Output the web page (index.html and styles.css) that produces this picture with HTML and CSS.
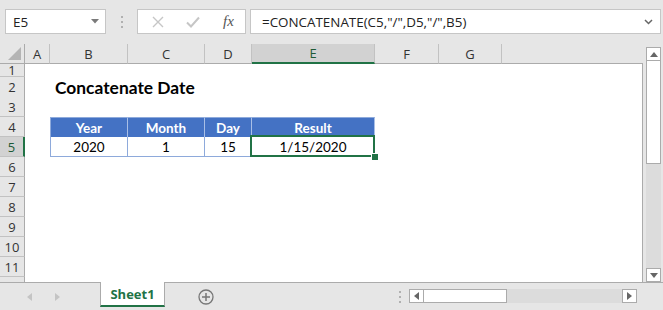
FILE: index.html
```html
<!DOCTYPE html>
<html lang="en">
<head>
  <meta charset="UTF-8">
  <title>Concatenate Date</title>
  <link rel="stylesheet" href="styles.css">
</head>
<body>
  <div class="app">
    <!-- Name box + formula bar -->
    <div class="toolbar">
      <div class="namebox">
        <span>E5</span>
        <svg class="caret" width="8" height="5" viewBox="0 0 8 5"><path d="M0 0h8L4 4.5z" fill="#7a7a7a"/></svg>
      </div>
      <div class="grip"><i></i><i></i><i></i></div>
      <div class="fxbtns">
        <svg width="12" height="12" viewBox="0 0 12 12"><path d="M1 1l10 10M11 1L1 11" stroke="#c6c6c6" stroke-width="1.4"/></svg>
        <svg width="14" height="12" viewBox="0 0 14 12"><path d="M1 6.5l4 4L13 1.5" stroke="#c6c6c6" stroke-width="2" fill="none"/></svg>
        <span class="fx">fx</span>
      </div>
      <div class="formula">
        <span>=CONCATENATE(C5,"/",D5,"/",B5)</span>
        <svg width="9" height="6" viewBox="0 0 9 6"><path d="M1 1l3.5 3.5L8 1" stroke="#666" stroke-width="1.5" fill="none"/></svg>
      </div>
    </div>

    <div class="main">
      <div class="sheet">
        <div class="row colhead">
          <div class="corner"></div>
          <div class="ch">A</div>
          <div class="ch">B</div>
          <div class="ch">C</div>
          <div class="ch">D</div>
          <div class="ch selected">E</div>
          <div class="ch">F</div>
          <div class="ch">G</div>
          <div class="ch last"></div>
        </div>
        <div class="row r1"><div class="rh"><span>1</span></div></div>
        <div class="row">
          <div class="rh">2</div>
          <div></div>
          <div class="title">Concatenate Date</div>
        </div>
        <div class="row"><div class="rh">3</div></div>
        <div class="row">
          <div class="rh">4</div>
          <div></div>
          <div class="tc th first">Year</div>
          <div class="tc th">Month</div>
          <div class="tc th">Day</div>
          <div class="tc th">Result</div>
        </div>
        <div class="row">
          <div class="rh selected">5</div>
          <div></div>
          <div class="tc first">2020</div>
          <div class="tc">1</div>
          <div class="tc">15</div>
          <div class="tc active">1/15/2020</div>
        </div>
        <div class="row"><div class="rh">6</div></div>
        <div class="row"><div class="rh">7</div></div>
        <div class="row"><div class="rh">8</div></div>
        <div class="row"><div class="rh">9</div></div>
        <div class="row"><div class="rh">10</div></div>
        <div class="row"><div class="rh">11</div></div>
        <div class="row r12"><div class="rh"></div></div>
      </div>

      <div class="vscroll">
        <div class="sbtn">
          <svg width="8" height="5" viewBox="0 0 8 5"><path d="M0 5h8L4 0z" fill="#666"/></svg>
        </div>
        <div class="vthumb"></div>
        <div class="vtrack"></div>
        <div class="sbtn">
          <svg width="8" height="5" viewBox="0 0 8 5"><path d="M0 0h8L4 5z" fill="#666"/></svg>
        </div>
      </div>
    </div>

    <!-- Sheet tabs + horizontal scroll -->
    <div class="tabbar">
      <div class="tabnav">
        <svg width="5" height="8" viewBox="0 0 5 8"><path d="M5 0v8L0 4z" fill="#c4c4c4"/></svg>
        <svg width="5" height="8" viewBox="0 0 5 8"><path d="M0 0v8l5-4z" fill="#c4c4c4"/></svg>
      </div>
      <div class="tab">Sheet1</div>
      <svg class="addsheet" width="16" height="16" viewBox="0 0 16 16">
        <circle cx="8" cy="8" r="7" stroke="#777" stroke-width="1.3" fill="none"/>
        <path d="M8 4v8M4 8h8" stroke="#777" stroke-width="1.5"/>
      </svg>
      <div class="grip hgrip"><i></i><i></i><i></i></div>
      <div class="hscroll">
        <div class="sbtn">
          <svg width="5" height="8" viewBox="0 0 5 8"><path d="M5 0v8L0 4z" fill="#666"/></svg>
        </div>
        <div class="hthumb"></div>
        <div class="htrack"></div>
        <div class="sbtn">
          <svg width="5" height="8" viewBox="0 0 5 8"><path d="M0 0v8l5-4z" fill="#666"/></svg>
        </div>
      </div>
    </div>
  </div>
</body>
</html>
```

FILE: styles.css
```css
body {
  margin: 0;
  background-color: #e6e6e6;
  font-family: 'Open Sans', sans-serif;
  color: #333;
}

.app {
  width: 663px;
  height: 310px;
  overflow: hidden;
  background-color: #e6e6e6;
}

/* Barra de fórmulas */
.toolbar {
  height: 44px;
  display: flex;
  align-items: flex-start;
  padding-top: 9px;
  box-sizing: border-box;
}

.namebox {
  margin-left: 5px;
  width: 101px;
  height: 25px;
  box-sizing: border-box;
  background-color: #fff;
  border: 1px solid #c6c6c6;
  display: flex;
  align-items: center;
  justify-content: space-between;
  padding: 0 6px 0 7px;
  font-size: 13.5px;
  color: #222;
}

.grip {
  width: 31px;
  height: 25px;
  display: flex;
  flex-direction: column;
  align-items: center;
  justify-content: center;
  gap: 3px;
}

.grip i {
  display: block;
  width: 2px;
  height: 2px;
  background-color: #b0b0b0;
}

.fxbtns {
  width: 109px;
  height: 25px;
  box-sizing: border-box;
  background-color: #fff;
  border: 1px solid #c6c6c6;
  display: flex;
  align-items: center;
  padding-left: 14px;
  gap: 22px;
}

.fx {
  font-family: 'Liberation Serif', serif;
  font-style: italic;
  font-size: 15px;
  color: #555;
  margin-left: 1px;
}

.formula {
  margin-left: 4px;
  width: 411px;
  height: 25px;
  box-sizing: border-box;
  background-color: #fff;
  border: 1px solid #c6c6c6;
  display: flex;
  align-items: center;
  justify-content: space-between;
  padding: 0 7px 0 11px;
  font-size: 13.4px;
  color: #222;
}

/* Hoja */
.main {
  display: flex;
  height: 238px;
}

.sheet {
  width: 643px;
  background-color: #fff;
}

.row {
  display: grid;
  grid-template-columns: 25px 25px 78px 77px 47px 123px 64px 63px 1fr;
  height: 20px;
  border-right: 1px solid #ababab;
}

.colhead {
  background-color: #e6e6e6;
  border-right: none;
}

.corner {
  position: relative;
  border-right: 1px solid #ababab;
  border-bottom: 1px solid #ababab;
}

.corner::after {
  content: '';
  position: absolute;
  right: 3px;
  bottom: 3px;
  width: 13px;
  height: 13px;
  background-color: #b4b4b4;
  clip-path: polygon(100% 0, 100% 100%, 0 100%);
}

.ch {
  border-right: 1px solid #c2c2c2;
  border-bottom: 1px solid #ababab;
  display: flex;
  align-items: center;
  justify-content: center;
  font-size: 13px;
  color: #333;
}

.ch.last {
  border-right: none;
}

.ch.selected {
  background-color: #d2d2d2;
  border-bottom: 2px solid #217346;
  color: #1d5a37;
}

.rh {
  background-color: #e6e6e6;
  border-right: 1px solid #ababab;
  border-bottom: 1px solid #c2c2c2;
  display: flex;
  align-items: center;
  justify-content: center;
  font-size: 13px;
  color: #333;
  overflow: hidden;
}

.rh.selected {
  background-color: #d2d2d2;
  border-right: 2px solid #217346;
  color: #1d5a37;
}

.r1 {
  height: 13px;
}

.r1 .rh {
  align-items: flex-end;
}

.r1 .rh span {
  line-height: 20px;
  margin-bottom: -4px;
}

.r12 {
  height: 5px;
}

.r12 .rh {
  border-bottom: none;
}

.title {
  font-family: 'Lato', sans-serif;
  font-weight: bold;
  font-size: 17.4px;
  color: #000;
  white-space: nowrap;
  display: flex;
  align-items: center;
  padding-left: 5px;
}

/* Tabla */
.tc {
  font-family: 'Lato', sans-serif;
  font-size: 13.5px;
  color: #000;
  display: flex;
  align-items: center;
  justify-content: center;
  border-right: 1px solid #8eaadb;
  border-bottom: 1px solid #8eaadb;
}

.tc.first {
  border-left: 1px solid #8eaadb;
}

.th {
  background-color: #4472c4;
  color: #fff;
  font-weight: bold;
  border-top: 1px solid #8eaadb;
  border-right-color: #a9bfe6;
  border-bottom: none;
}

.tc.active {
  position: relative;
}

.tc.active::before {
  content: '';
  position: absolute;
  left: -2px;
  top: -2px;
  right: -1px;
  bottom: -1px;
  border: 2px solid #217346;
}

.tc.active::after {
  content: '';
  position: absolute;
  right: -4px;
  bottom: -4px;
  width: 6px;
  height: 6px;
  background-color: #217346;
  border: 1px solid #fff;
  border-width: 1px 0 0 1px;
}

/* Barras de desplazamiento */
.vscroll {
  width: 20px;
  padding: 3px 2px 0 3px;
  box-sizing: border-box;
  display: flex;
  flex-direction: column;
}

.sbtn {
  background-color: #fff;
  border: 1px solid #ababab;
  box-sizing: border-box;
  display: flex;
  align-items: center;
  justify-content: center;
}

.vscroll .sbtn {
  height: 14px;
}

.vthumb {
  height: 103px;
  background-color: #fff;
  border: 1px solid #ababab;
  border-top: none;
  box-sizing: border-box;
}

.vtrack {
  flex: 1;
  background-color: #dcdcdc;
}

.tabbar {
  height: 28px;
  border-top: 1px solid #ababab;
  box-sizing: border-box;
  display: flex;
  align-items: flex-start;
}

.tabnav {
  width: 100px;
  height: 27px;
  display: flex;
  align-items: center;
  padding-left: 27px;
  gap: 23px;
  box-sizing: border-box;
}

.tab {
  width: 65px;
  height: 25px;
  margin-top: -1px;
  box-sizing: border-box;
  background-color: #fff;
  border-left: 1px solid #ababab;
  border-right: 1px solid #ababab;
  border-bottom: 2px solid #217346;
  display: flex;
  align-items: center;
  justify-content: center;
  font-size: 13px;
  font-weight: bold;
  color: #217346;
}

.addsheet {
  margin: 6px 0 0 33px;
}

.hgrip {
  width: 18px;
  height: 27px;
  margin-left: 177px;
}

.hscroll {
  width: 228px;
  height: 14px;
  margin-top: 6px;
  display: flex;
}

.hscroll .sbtn {
  width: 15px;
}

.hthumb {
  width: 83px;
  background-color: #fff;
  border: 1px solid #ababab;
  border-left: none;
  box-sizing: border-box;
}

.htrack {
  flex: 1;
  background-color: #dcdcdc;
}
```
